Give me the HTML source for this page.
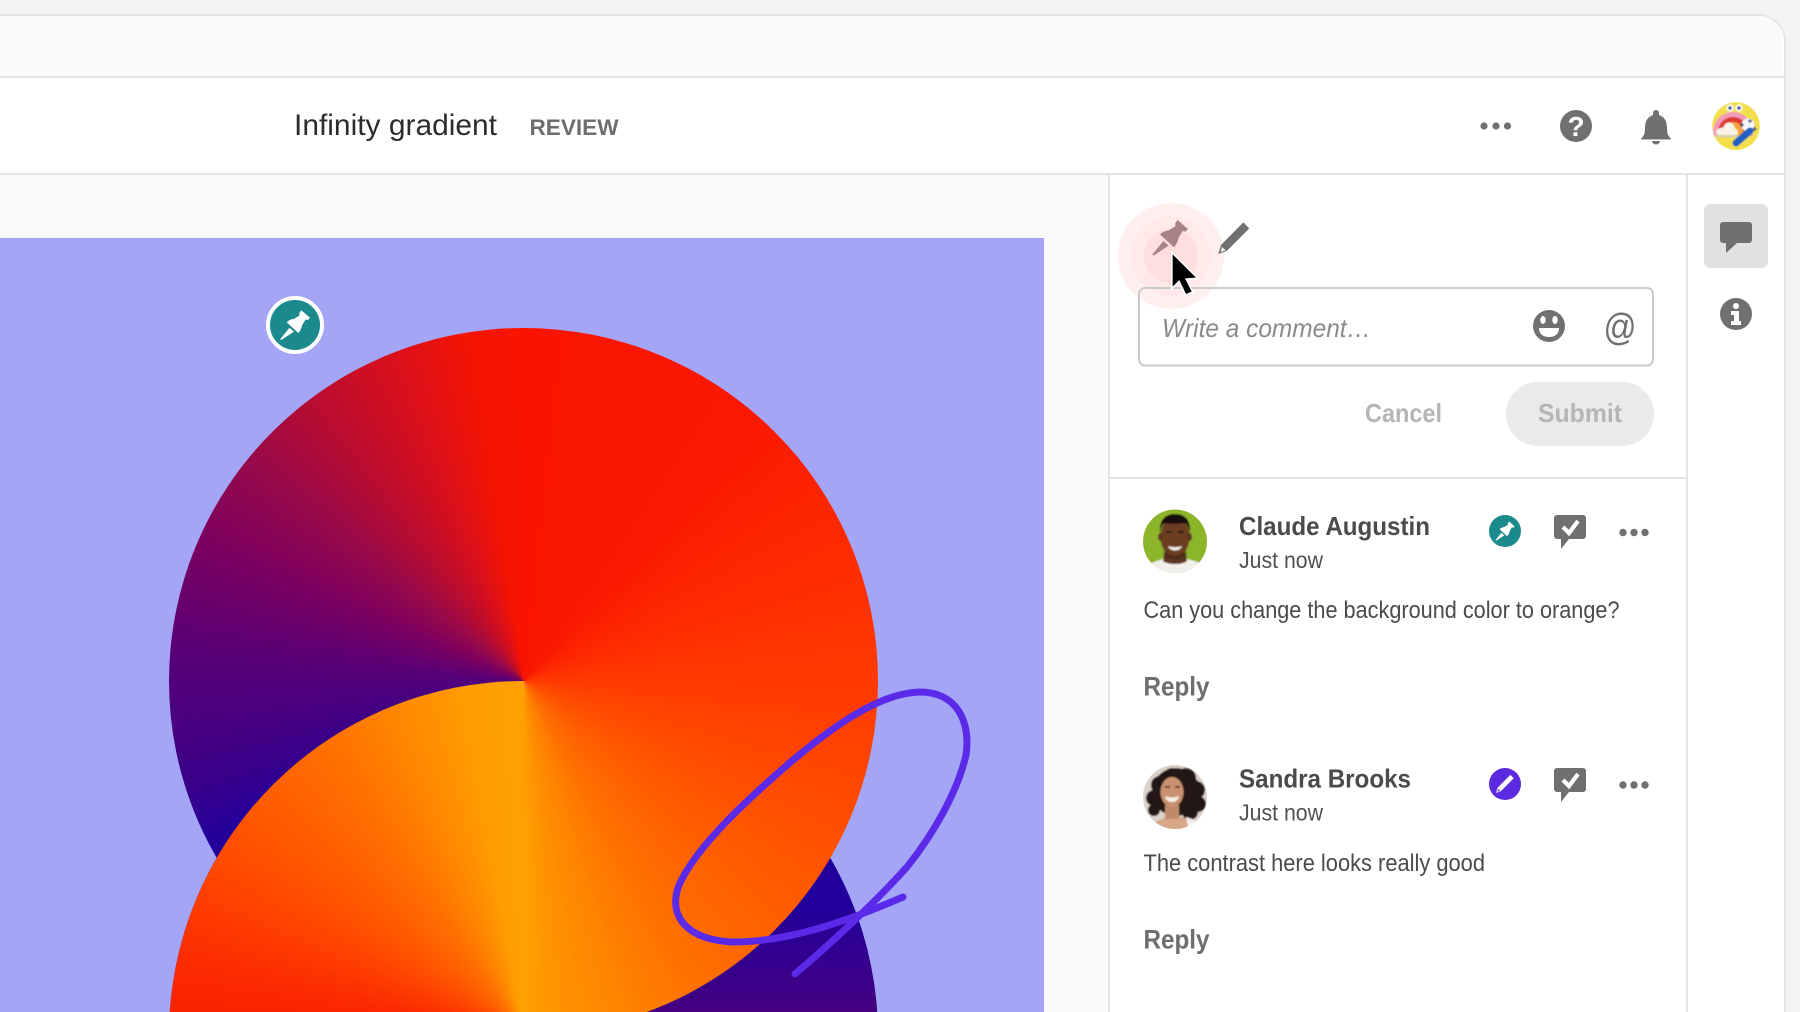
<!DOCTYPE html>
<html lang="en"><head><meta charset="utf-8"><title>Infinity gradient</title>
<style>
html,body{margin:0;padding:0;width:1800px;height:1012px;overflow:hidden;background:#f4f4f4;font-family:"Liberation Sans",sans-serif}
.abs{position:absolute}
#root{position:absolute;left:0;top:0;width:1800px;height:1012px;overflow:hidden}
#win{left:-40px;top:14px;width:1826px;height:998px;box-sizing:border-box;border:2px solid #e6e6e6;border-bottom:0;border-radius:28px 28px 0 0;background:#fff;overflow:hidden}
#art{left:0;top:238px;width:1044px;height:774px;overflow:hidden;background:#a4a5f6}
svg{position:absolute;left:0;top:0;width:1800px;height:1012px;overflow:hidden}
text{font-family:"Liberation Sans",sans-serif}
</style></head>
<body>
<div id="root">
<div class="abs" id="win"></div>
<div class="abs" style="left:0;top:16px;width:1783px;height:60px;background:#fafafa;border-radius:0 26px 0 0"></div>
<div class="abs" style="left:0;top:76px;width:1784px;height:2px;background:#e4e4e4"></div>
<div class="abs" style="left:0;top:173px;width:1784px;height:2px;background:#e4e4e4"></div>
<div class="abs" style="left:0;top:175px;width:1108px;height:837px;background:#fafafa"></div>
<div class="abs" id="art">
  <div class="abs" style="left:169px;top:443px;width:709px;height:331px;clip-path:circle(354.5px at 354.5px 354.5px);background:linear-gradient(#22009b 227px,#450080 331px)"></div>
  <div class="abs" style="left:169px;top:90px;width:709px;height:684px;clip-path:ellipse(354.5px 353px at 354.5px 353px);background:conic-gradient(from 0deg at 354.5px 353px,#fa1400 0deg,#fa1800 40deg,#ff2c00 70deg,#ff3d00 95deg,#ff5200 120deg,#ff7000 150deg,#ff9000 172deg,#ffa000 180deg,#ffa000 183deg,#20009c 183deg,#20009c 235deg,#26009a 244deg,#3a0088 253deg,#480080 262deg,#580076 275deg,#7a0060 293deg,#9a0a48 310deg,#b80c30 323deg,#dd1018 340deg,#f51400 352deg,#fa1400 360deg)"></div>
  <div class="abs" style="left:169px;top:443px;width:354.5px;height:331px;clip-path:circle(354.5px at 354.5px 354.5px);background:conic-gradient(from 270deg at 354.5px 354.5px,#f92000 0deg,#fb2800 10deg,#ff4a00 30deg,#ff7000 56deg,#ff9c00 80deg,#ffa000 90deg)"></div>
</div>
<svg width="1800" height="1012" viewBox="0 0 1800 1012" xmlns="http://www.w3.org/2000/svg">
<defs>
  <g id="pin">
    <path d="M203 75L234 102L226 110L218 108L206 128Q203 145 192 157L150 118Q160 108 176 106L196 94L196 84Z"/>
    <path d="M160 138L176 152L132 181L126 180Z"/>
  </g>
  <clipPath id="c1"><circle cx="1175" cy="541.5" r="32"/></clipPath>
  <clipPath id="c2"><circle cx="1175" cy="797" r="32"/></clipPath>
  <clipPath id="c3"><circle cx="1736" cy="126" r="24"/></clipPath>
  <filter id="b1" x="-10%" y="-10%" width="120%" height="120%"><feGaussianBlur stdDeviation="0.7"/></filter>
  <filter id="b2" x="-10%" y="-10%" width="120%" height="120%"><feGaussianBlur stdDeviation="0.4"/></filter>
</defs>

<!-- panels -->
<rect x="1108" y="175" width="2" height="837" fill="#e4e4e4"/>
<rect x="1686" y="175" width="2" height="837" fill="#e4e4e4"/>
<rect x="1108" y="477" width="579" height="2" fill="#e4e4e4"/>

<!-- header -->
<text x="294" y="135" font-size="30" fill="#2c2c2c" textLength="203" lengthAdjust="spacingAndGlyphs">Infinity gradient</text>
<text x="529.500" y="135" font-size="22" font-weight="bold" fill="#6e6e6e" textLength="89" lengthAdjust="spacingAndGlyphs">REVIEW</text>
<g fill="#707070"><circle cx="1484" cy="126" r="3.6"/><circle cx="1496" cy="126" r="3.6"/><circle cx="1507.500" cy="126" r="3.6"/></g>
<circle cx="1576" cy="126" r="16" fill="#707070"/>
<text x="1576" y="136" font-size="28" font-weight="bold" fill="#fff" text-anchor="middle">?</text>
<path fill="#707070" d="M1656 110a3 3 0 0 1 3 3v2c6 2 8 7 8 13c0 5 1 8 3.500 10v1.500h-29v-1.500c2.500-2 3.500-5 3.500-10c0-6 2-11 8-13v-2a3 3 0 0 1 3-3zM1652 141h8c0 2-2 3.500-4 3.500s-4-1.500-4-3.500z"/>

<!-- top avatar -->
<g clip-path="url(#c3)" filter="url(#b2)">
  <circle cx="1736" cy="126" r="24" fill="#f3df4b"/>
  <circle cx="1733" cy="132" r="20" fill="#f29ab8"/>
  <circle cx="1733" cy="132" r="15" fill="#de3a36"/>
  <circle cx="1733" cy="132" r="10" fill="#f6a23c"/>
  <circle cx="1733" cy="132" r="5" fill="#f6dc60"/>
  <rect x="1712" y="136" width="48" height="20" fill="#f3df4b"/>
  <ellipse cx="1727" cy="132" rx="11" ry="5" fill="#f7f3e6"/><circle cx="1729" cy="128" r="5.500" fill="#f7f3e6"/>
  <rect x="1716" y="135" width="23" height="2.500" fill="#d9cfa8"/>
  <circle cx="1730" cy="108" r="3.500" fill="#fff"/><circle cx="1730" cy="108" r="1.800" fill="#2b4aa0"/>
  <circle cx="1739" cy="108" r="3.500" fill="#fff"/><circle cx="1739" cy="108" r="1.800" fill="#2b4aa0"/>
  <circle cx="1748" cy="125" r="6.500" fill="#f4f6fb"/>
  <line x1="1736" y1="143" x2="1750" y2="131" stroke="#2160c4" stroke-width="7" stroke-linecap="round"/>
  <path d="M1740 125h4M1742 123v4M1748 121h4M1750 119v4M1752 129h5M1754.500 126.500v5" stroke="#25407c" stroke-width="1.200"/>
</g>

<!-- art overlays -->
<path d="M795 974C830 944 870 908 907 867C935 832 958 790 966 755C971 722 957 692 920 692C880 693 835 725 793 760C750 797 697 845 679 885C667 917 688 940 733 942C790 942 850 920 903 897" fill="none" stroke="#5b2ae8" stroke-width="7" stroke-linecap="round" stroke-linejoin="round"/>
<circle cx="295" cy="325" r="27" fill="#1a8a8c" stroke="#fff" stroke-width="4"/>
<use href="#pin" fill="#fff" transform="translate(295 325) scale(.278) translate(-180 -128)"/>

<!-- pink click ripple -->
<circle cx="1171" cy="256" r="53" fill="#fff0f0"/>
<circle cx="1171" cy="256" r="40" fill="#ffe9e9"/>
<circle cx="1171" cy="256" r="27" fill="#ffdede"/>

<!-- tool icons -->
<use href="#pin" fill="#a98383" transform="translate(1110 195) scale(.3333)"/>
<g transform="translate(1110 195) scale(.3333)">
  <path fill="#707070" d="M400 82L418 100L350 168L325 177L333 150Z"/>
  <path fill="#fff" d="M332 171L336 156L347 166Z"/>
</g>

<!-- input -->
<rect x="1139" y="288" width="514" height="77.500" rx="6" fill="none" stroke="#cbcbcb" stroke-width="2"/>
<text x="1162" y="337" font-size="26" font-style="italic" fill="#8a8a8a" textLength="209" lengthAdjust="spacingAndGlyphs">Write a comment…</text>
<circle cx="1549" cy="326" r="16" fill="#707070"/>
<ellipse cx="1543" cy="320" rx="2.700" ry="4" fill="#fff"/><ellipse cx="1555" cy="320" rx="2.700" ry="4" fill="#fff"/>
<path d="M1539 328h20c0 6-4 9-10 9s-10-3-10-9z" fill="#fff"/>
<text x="1620" y="340" font-size="38" fill="#707070" text-anchor="middle" textLength="33" lengthAdjust="spacingAndGlyphs">@</text>

<!-- cursor -->
<g transform="translate(1110 195) scale(.3333)">
  <path d="M188 178L258 248L225 250L245 290L228 297L208 255L188 275Z" fill="#000" stroke="#fff" stroke-width="10" stroke-linejoin="miter" paint-order="stroke"/>
</g>

<!-- actions -->
<text x="1365" y="422" font-size="26" font-weight="bold" fill="#b5b5b5" textLength="77" lengthAdjust="spacingAndGlyphs">Cancel</text>
<rect x="1506" y="382" width="148" height="64" rx="32" fill="#eaeaea"/>
<text x="1538" y="422" font-size="26" font-weight="bold" fill="#b5b5b5" textLength="84" lengthAdjust="spacingAndGlyphs">Submit</text>

<!-- side rail -->
<rect x="1704" y="204" width="64" height="64" rx="7" fill="#e1e1e1"/>
<path fill="#707070" d="M1723 222h26a3 3 0 0 1 3 3v15a3 3 0 0 1-3 3h-12l-11 10v-10h-3a3 3 0 0 1-3-3v-15a3 3 0 0 1 3-3z"/>
<circle cx="1736" cy="314" r="16" fill="#707070"/>
<circle cx="1736" cy="306" r="3" fill="#fff"/>
<path fill="#fff" d="M1731 311h8v10h2v4h-10v-4h3v-6h-3z"/>

<!-- comment 1 -->
<g clip-path="url(#c1)" filter="url(#b1)">
  <rect x="1140" y="508" width="70" height="68" fill="#8db52a"/>
  <path d="M1140 580c2-14 10-17 23-21h24c14 3 21 7 25 21z" fill="#f1efe9"/>
  <path d="M1165 552h20l2 9c-5 4-19 4-24 0z" fill="#5f3420"/>
  <ellipse cx="1175" cy="537" rx="14.500" ry="20" fill="#6d3c24"/>
  <ellipse cx="1160.500" cy="537" rx="2.500" ry="4" fill="#5f3420"/><ellipse cx="1189.500" cy="537" rx="2.500" ry="4" fill="#5f3420"/>
  <path d="M1160 533c-1-13 5-19 15-19s16 6 15 19c-2-6-3-9-5-10-6 1-14 1-20 0-2 1-4 4-5 10z" fill="#17110e"/>
  <path d="M1166 532h6M1178 532h6" stroke="#1c120d" stroke-width="2"/>
  <path d="M1168 546c4 1.500 10 1.500 14 0-1 3-4 4.500-7 4.500s-6-1.500-7-4.500z" fill="#f3eee8"/>
  <path d="M1164 550c6 7 16 7 22 0l1 6c-6 4-18 4-24 0z" fill="#2c1a12" opacity=".4"/>
</g>
<text x="1239" y="535" font-size="26" font-weight="bold" fill="#4b4b4b" textLength="191" lengthAdjust="spacingAndGlyphs">Claude Augustin</text>
<text x="1239" y="568" font-size="23" fill="#505050" textLength="84" lengthAdjust="spacingAndGlyphs">Just now</text>
<text x="1143.500" y="618" font-size="24" fill="#4b4b4b" textLength="476" lengthAdjust="spacingAndGlyphs">Can you change the background color to orange?</text>
<text x="1143.500" y="695.500" font-size="27" font-weight="bold" fill="#6e6e6e" textLength="66" lengthAdjust="spacingAndGlyphs">Reply</text>
<circle cx="1505" cy="531" r="16" fill="#1a8a8c"/>
<use href="#pin" fill="#fff" transform="translate(1505 531) scale(.18) translate(-180 -128)"/>
<path fill="#707070" d="M1557 515h26a3 3 0 0 1 3 3v18a3 3 0 0 1-3 3h-14l-8 10v-10h-4a3 3 0 0 1-3-3v-18a3 3 0 0 1 3-3z"/>
<path d="M1563 527l6 6l9-12" fill="none" stroke="#fff" stroke-width="4.200"/>
<g fill="#707070"><circle cx="1623" cy="532.500" r="3.700"/><circle cx="1634" cy="532.500" r="3.700"/><circle cx="1645" cy="532.500" r="3.700"/></g>

<!-- comment 2 -->
<g clip-path="url(#c2)" filter="url(#b1)">
  <rect x="1140" y="763" width="70" height="68" fill="#dcd3ca"/>
  <g fill="#241612">
    <ellipse cx="1176" cy="792" rx="24" ry="24"/>
    <circle cx="1160" cy="785" r="9"/><circle cx="1172" cy="777" r="9"/><circle cx="1186" cy="778" r="10"/>
    <circle cx="1196" cy="790" r="9"/><circle cx="1198" cy="804" r="8"/><circle cx="1154" cy="798" r="8"/>
    <circle cx="1154" cy="810" r="6"/><circle cx="1190" cy="812" r="8"/>
  </g>
  <path d="M1143 836c3-11 14-15 24-19h14c8 2 16 4 24 8l-2 11z" fill="#d8a688"/>
  <path d="M1186 817l4 19h6l-1-16z" fill="#f2efe9"/>
  <rect x="1165" y="805" width="14" height="14" fill="#c08a6a"/>
  <ellipse cx="1172" cy="792" rx="11.500" ry="15" fill="#c9916f"/>
  <path d="M1165 787h5M1175 787h5" stroke="#352017" stroke-width="1.600"/>
  <path d="M1165 796c4 2 10 2 14 0-1 4-3 6-7 6s-6-2-7-6z" fill="#f5f0ea"/>
</g>
<text x="1239" y="787.500" font-size="26" font-weight="bold" fill="#4b4b4b" textLength="172" lengthAdjust="spacingAndGlyphs">Sandra Brooks</text>
<text x="1239" y="820.500" font-size="23" fill="#505050" textLength="84" lengthAdjust="spacingAndGlyphs">Just now</text>
<text x="1143.500" y="871" font-size="24" fill="#4b4b4b" textLength="341.500" lengthAdjust="spacingAndGlyphs">The contrast here looks really good</text>
<text x="1143.500" y="948.500" font-size="27" font-weight="bold" fill="#6e6e6e" textLength="66" lengthAdjust="spacingAndGlyphs">Reply</text>
<circle cx="1505" cy="784" r="16" fill="#5b2ae0"/>
<g transform="translate(1505 784) scale(.19) translate(-372 -130)">
  <path fill="#fff" d="M400 82L418 100L350 168L325 177L333 150Z"/>
  <path fill="#5b2ae0" d="M332 171L336 156L347 166Z"/>
</g>
<g transform="translate(0 253)">
  <path fill="#707070" d="M1557 515h26a3 3 0 0 1 3 3v18a3 3 0 0 1-3 3h-14l-8 10v-10h-4a3 3 0 0 1-3-3v-18a3 3 0 0 1 3-3z"/>
  <path d="M1563 527l6 6l9-12" fill="none" stroke="#fff" stroke-width="4.200"/>
</g>
<g fill="#707070"><circle cx="1623" cy="785" r="3.700"/><circle cx="1634" cy="785" r="3.700"/><circle cx="1645" cy="785" r="3.700"/></g>
</svg>
</div>
</body></html>
